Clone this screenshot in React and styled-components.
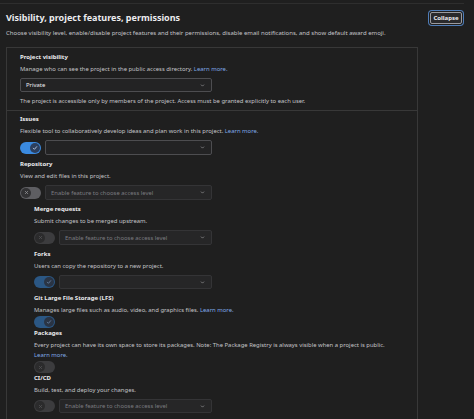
import React from "react";
import styled, { createGlobalStyle } from "styled-components";

const colors = {
  bg: "#1f1f1f",
  border: "#383838",
  label: "#ececef",
  text: "#c4c4c8",
  muted: "#7b7b80",
  link: "#7fa9e6",
  blue: "#3a8ae0",
  blueDim: "#2b5784",
};

const GlobalStyle = createGlobalStyle`
  body {
    margin: 0;
    background: ${colors.bg};
    font-family: "Noto Sans", "Open Sans", sans-serif;
    color: ${colors.text};
  }
`;

const Page = styled.div`
  height: 419px;
  box-sizing: border-box;
  padding: 3px 10px 0 0;
  overflow: hidden;
`;

const Section = styled.section`
  border-top: 1px solid #2e2e2e;
  padding-left: 6px;
`;

const Header = styled.div`
  display: flex;
  justify-content: space-between;
  align-items: flex-start;
`;

const HeaderText = styled.div`
  padding-top: 8px;
`;

const Title = styled.h2`
  margin: 0;
  font-size: 9px;
  line-height: 12px;
  font-weight: 700;
  color: ${colors.label};
`;

const Subtitle = styled.p`
  margin: 4px 0 0;
  font-size: 6px;
  line-height: 10px;
  color: ${colors.text};
  white-space: nowrap;
`;

const CollapseButton = styled.button`
  margin: 8px 2px 0 0;
  width: 32px;
  height: 12px;
  padding: 0;
  border: 1px solid #9a9a9e;
  border-radius: 2px;
  background: #2a2a2c;
  color: ${colors.label};
  font-family: inherit;
  font-size: 6px;
  font-weight: 700;
  box-shadow: 0 0 0 1px #1f1f1f, 0 0 0 2px #4f7db8;
`;

const Panel = styled.div`
  margin-top: 9px;
  width: 412px;
  box-sizing: border-box;
  border: 1px solid ${colors.border};
  border-bottom: none;
  padding-top: 4px;
  height: 400px;
`;

const VisibilityBlock = styled.div`
  padding: 0 14px 4px 13px;
  border-bottom: 1px solid ${colors.border};
`;

const Features = styled.div`
  padding: 3px 14px 0 13px;
`;

const Label = styled.div`
  font-size: 6px;
  line-height: 10px;
  font-weight: 700;
  color: ${colors.label};
`;

const Desc = styled.p`
  margin: 2px 0 0;
  font-size: 5.9px;
  line-height: 10px;
  color: ${colors.text};
`;

const Note = styled(Desc)`
  margin-top: 3px;
`;

const Link = styled.a`
  color: ${colors.link};
  text-decoration: none;
  white-space: nowrap;
`;

const Feature = styled.div`
  padding-left: ${(p) => (p.$sub ? 14 : 0)}px;
`;

const Controls = styled.div`
  display: flex;
  align-items: center;
  gap: 4px;
  width: ${(p) => (p.$sub ? 178 : 192)}px;
  margin: ${(p) => (p.$compact ? "1px 0 0" : "4px 0 4px")};
`;

const Select = styled.div`
  flex: 1;
  height: ${(p) => p.$h || 15}px;
  box-sizing: border-box;
  display: flex;
  align-items: center;
  justify-content: space-between;
  padding: 0 6px 0 5px;
  border: 1px solid ${(p) => (p.$disabled ? "#343436" : "#4d4d50")};
  border-radius: 2px;
  background: ${(p) => (p.$disabled ? "#262627" : "#232324")};
  color: ${(p) => (p.$disabled ? colors.muted : colors.label)};
  font-size: 5.9px;
`;

const TrackColors = {
  on: colors.blue,
  onDisabled: colors.blueDim,
  off: "#5e5e62",
  offDisabled: "#3c3c3e",
};

const Track = styled.div`
  flex: none;
  width: 21px;
  height: 12px;
  box-sizing: border-box;
  padding: 1px;
  border-radius: 6px;
  display: flex;
  justify-content: ${(p) => (p.$on ? "flex-end" : "flex-start")};
  background: ${(p) => TrackColors[(p.$on ? "on" : "off") + (p.$disabled ? "Disabled" : "")]};
`;

const Knob = styled.div`
  width: 10px;
  height: 10px;
  border-radius: 50%;
  display: flex;
  align-items: center;
  justify-content: center;
  background: ${(p) => (p.$on ? (p.$disabled ? "#2a3444" : "#2c3f5e") : p.$disabled ? "#2b2b2c" : "#323234")};
  color: ${(p) => (p.$on ? (p.$disabled ? "#6b86a8" : "#c9d8ef") : p.$disabled ? "#555558" : "#9a9a9e")};
`;

const Toggle = ({ on, disabled }) => (
  <Track $on={on} $disabled={disabled}>
    <Knob $on={on} $disabled={disabled}>
      {on ? (
        <svg width="6" height="6" viewBox="0 0 16 16" fill="none" stroke="currentColor" strokeWidth="2.2" strokeLinecap="round" strokeLinejoin="round">
          <path d="M3.5 8.5l3 3 6-7" />
        </svg>
      ) : (
        <svg width="5" height="5" viewBox="0 0 16 16" fill="none" stroke="currentColor" strokeWidth="2.2" strokeLinecap="round">
          <path d="M4 4l8 8M12 4l-8 8" />
        </svg>
      )}
    </Knob>
  </Track>
);

const Chevron = () => (
  <svg width="5" height="5" viewBox="0 0 16 16" fill="none" stroke="#a8a8ac" strokeWidth="2" strokeLinecap="round" strokeLinejoin="round">
    <path d="M4 6l4 4 4-4" />
  </svg>
);

const features = [
  {
    label: "Issues",
    desc: (
      <>
        Flexible tool to collaboratively develop ideas and plan work in this project. <Link href="#">Learn more.</Link>
      </>
    ),
    on: true,
    select: { text: "" },
  },
  {
    label: "Repository",
    desc: "View and edit files in this project.",
    on: false,
    select: { text: "Enable feature to choose access level", disabled: true },
  },
  {
    label: "Merge requests",
    desc: "Submit changes to be merged upstream.",
    sub: true,
    on: false,
    disabled: true,
    select: { text: "Enable feature to choose access level", disabled: true },
  },
  {
    label: "Forks",
    desc: "Users can copy the repository to a new project.",
    sub: true,
    on: true,
    disabled: true,
    select: { text: "", disabled: true, h: 14 },
  },
  {
    label: "Git Large File Storage (LFS)",
    desc: (
      <>
        Manages large files such as audio, video, and graphics files. <Link href="#">Learn more.</Link>
      </>
    ),
    sub: true,
    on: true,
    disabled: true,
  },
  {
    label: "Packages",
    desc: (
      <>
        Every project can have its own space to store its packages. Note: The Package Registry is always visible when a project is public.{" "}
        <Link href="#">Learn more.</Link>
      </>
    ),
    sub: true,
    on: false,
    disabled: true,
  },
  {
    label: "CI/CD",
    desc: "Build, test, and deploy your changes.",
    sub: true,
    on: false,
    disabled: true,
    select: { text: "Enable feature to choose access level", disabled: true, h: 14 },
  },
];

export default function App() {
  return (
    <Page>
      <GlobalStyle />
      <Section>
        <Header>
          <HeaderText>
            <Title>Visibility, project features, permissions</Title>
            <Subtitle>
              Choose visibility level, enable/disable project features and their permissions, disable email notifications, and show default award emoji.
            </Subtitle>
          </HeaderText>
          <CollapseButton>Collapse</CollapseButton>
        </Header>

        <Panel>
          <VisibilityBlock>
            <Label>Project visibility</Label>
            <Desc>
              Manage who can see the project in the public access directory. <Link href="#">Learn more.</Link>
            </Desc>
            <Controls>
              <Select $h={14}>
                <span>Private</span>
                <Chevron />
              </Select>
            </Controls>
            <Note>The project is accessible only by members of the project. Access must be granted explicitly to each user.</Note>
          </VisibilityBlock>

          <Features>
            {features.map((f) => (
              <Feature key={f.label} $sub={f.sub}>
                <Label>{f.label}</Label>
                <Desc>{f.desc}</Desc>
                <Controls $sub={f.sub} $compact={!f.select}>
                  <Toggle on={f.on} disabled={f.disabled} />
                  {f.select && (
                    <Select $disabled={f.select.disabled} $h={f.select.h}>
                      <span>{f.select.text}</span>
                      <Chevron />
                    </Select>
                  )}
                </Controls>
              </Feature>
            ))}
          </Features>
        </Panel>
      </Section>
    </Page>
  );
}
